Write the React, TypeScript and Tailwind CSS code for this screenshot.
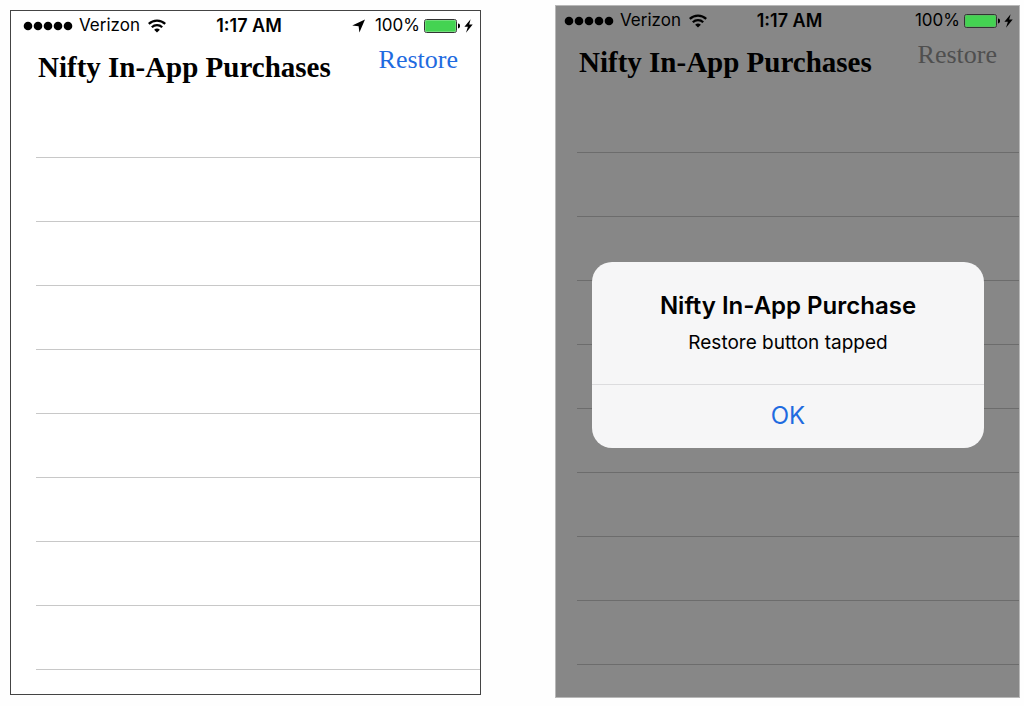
import { useId } from "react";

type PhoneProps = {
  dimmed?: boolean;
  showLocation?: boolean;
  children?: React.ReactNode;
};

const ROWS = 9;

function SignalDots() {
  return (
    <svg width="50" height="10" viewBox="0 0 50 10" fill="currentColor" aria-hidden="true">
      {[5, 15, 25, 35, 45].map((cx) => (
        <circle key={cx} cx={cx} cy="5" r="4.3" />
      ))}
    </svg>
  );
}

function WifiIcon() {
  return (
    <svg width="18" height="14" viewBox="0 0 18 14" fill="none" stroke="currentColor" strokeWidth="2.2" aria-hidden="true">
      <path d="M0.8 4.9a11.7 11.7 0 0 1 16.4 0" />
      <path d="M3.8 8.3a7.4 7.4 0 0 1 10.4 0" />
      <path d="M9 13.6 6.1 10.7a4.3 4.3 0 0 1 5.8 0Z" fill="currentColor" stroke="none" />
    </svg>
  );
}

function LocationIcon() {
  return (
    <svg width="13" height="14" viewBox="0 0 13 14" fill="currentColor" aria-hidden="true">
      <path d="M13 0.4 7.4 13.6 6.6 7.2 0.2 6.6Z" />
    </svg>
  );
}

function BatteryIcon() {
  return (
    <svg width="37" height="14" viewBox="0 0 37 14" aria-hidden="true">
      <rect x="0.5" y="0.5" width="32" height="13" rx="2" fill="none" stroke="#333" />
      <rect x="1.2" y="1.2" width="30.6" height="11.6" rx="1.2" fill="#44d352" />
      <path d="M34 4.6c1.6 0.3 2 1.2 2 2.4s-0.4 2.1-2 2.4Z" fill="#000" />
    </svg>
  );
}

function BoltIcon() {
  return (
    <svg width="9" height="14" viewBox="0 0 9 14" fill="currentColor" aria-hidden="true">
      <path d="M6.6 0.2 0.4 7.8h3.5L2 13.8l6.7-8.2H5.2Z" />
    </svg>
  );
}

function StatusBar({ showLocation }: { showLocation?: boolean }) {
  return (
    <div className="grid h-[30px] grid-cols-[1fr_auto_1fr] items-center text-[17px]">
      <div className="flex items-center">
        <SignalDots />
        <span className="mr-2 ml-1.5">Verizon</span>
        <WifiIcon />
      </div>
      <span className="pl-0.5 text-lg font-semibold">1:17 AM</span>
      <div className="flex items-center justify-end">
        {showLocation && <LocationIcon />}
        <span className="mr-1 ml-2.5">100%</span>
        <BatteryIcon />
        <span className="ml-[3px]">
          <BoltIcon />
        </span>
      </div>
    </div>
  );
}

function Phone({ dimmed, showLocation, children }: PhoneProps) {
  return (
    <section
      className={[
        "relative border text-black",
        dimmed ? "border-[#b8b8b8] bg-[#878787] pb-8" : "mt-[5px] border-[#444] bg-white pb-6 pl-1",
      ].join(" ")}
    >
      <div className={dimmed ? "pr-1.5 pl-2" : "pr-[7px] pl-2"}>
        <StatusBar showLocation={showLocation} />
      </div>
      <header className="flex h-[53px] items-start justify-between pr-[22px] pl-[23px] font-['Liberation_Serif',serif]">
        <h1 className="pt-2 text-[29px] leading-[36px] font-bold">Nifty In-App Purchases</h1>
        <button
          disabled={dimmed}
          className={["pt-px text-[26px] leading-[36px]", dimmed ? "text-[#4f4f4f]" : "text-[#1f6be0]"].join(" ")}
        >
          Restore
        </button>
      </header>
      <ul className="pl-[21px]">
        {Array.from({ length: ROWS }, (_, i) => (
          <li key={i} className={["h-16 border-b", dimmed ? "border-[#6c6c6c]" : "border-[#c8c8c8]"].join(" ")} />
        ))}
      </ul>
      {children}
    </section>
  );
}

function Alert({ title, message }: { title: string; message: string }) {
  const titleId = useId();

  return (
    <div className="absolute inset-0 flex items-center justify-center pt-1.5 pr-[35px] pl-9">
      <div
        role="alertdialog"
        aria-labelledby={titleId}
        className="w-full overflow-hidden rounded-[20px] bg-[#f6f6f7] text-center"
      >
        <div className="px-4 pt-7 pb-6">
          <h2 id={titleId} className="text-2xl font-semibold">
            {title}
          </h2>
          <p className="mt-1 text-[19px] leading-[34px]">{message}</p>
        </div>
        <button className="h-16 w-full border-t border-[#dcdcde] text-2xl text-[#1f6be0]">OK</button>
      </div>
    </div>
  );
}

export default function App() {
  return (
    <main className="grid grid-cols-[471fr_465fr] items-start gap-[74px] bg-[#fefefe] pt-[5px] pr-1 pb-2 pl-2.5 font-[Inter,sans-serif]">
      <Phone showLocation />
      <Phone dimmed>
        <Alert title="Nifty In-App Purchase" message="Restore button tapped" />
      </Phone>
    </main>
  );
}
